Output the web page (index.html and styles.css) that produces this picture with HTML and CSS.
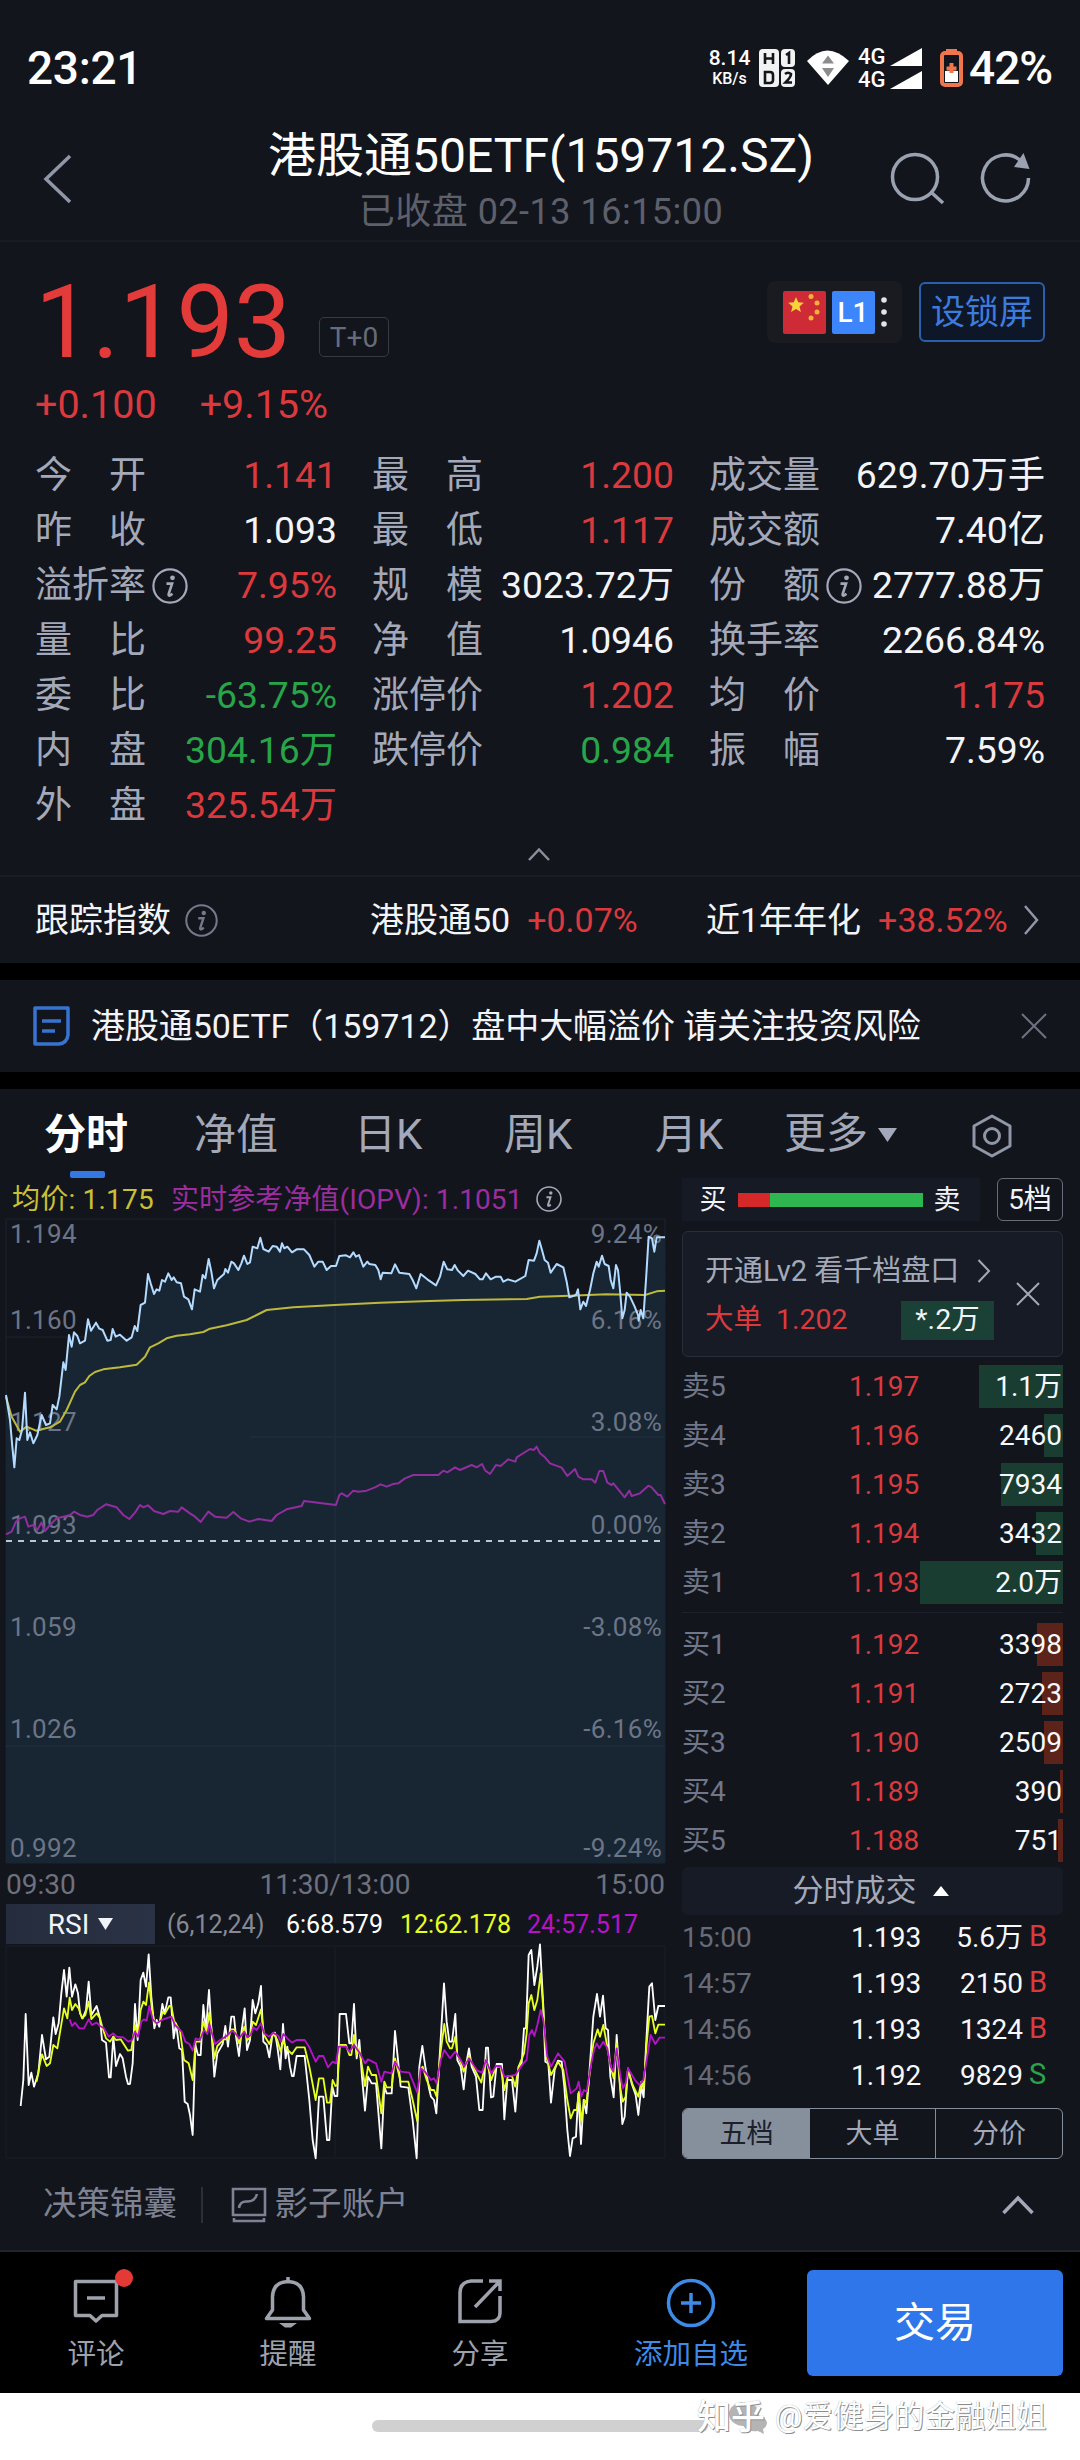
FILE: index.html
```html
<!DOCTYPE html>
<html lang="zh-CN">
<head>
<meta charset="utf-8">
<title>港股通50ETF(159712.SZ)</title>
<link rel="stylesheet" href="styles.css">
</head>
<body>
<svg class="defs" width="0" height="0">
  <symbol id="info" viewBox="0 0 36 36">
    <circle cx="18" cy="18" r="16.6" fill="none" stroke="currentColor" stroke-width="2.2"/>
    <circle cx="20.5" cy="9.8" r="2.4" fill="currentColor"/>
    <path d="M14.5 15.6h5.6l-3.4 10.2q-.6 2.4 1.6 1.6l2.2-1.6" fill="none" stroke="currentColor" stroke-width="2.6"/>
  </symbol>
</svg>

<header class="status">
  <span class="clock">23:21</span>
  <div class="status-icons">
    <div class="speed"><b>8.14</b><span>KB/s</span></div>
    <svg class="sim" width="36" height="38" viewBox="0 0 36 38">
      <rect x="0" y="0" width="20" height="38" rx="4" fill="#f2f2f2"/>
      <rect x="22" y="0" width="14" height="18" rx="4" fill="#f2f2f2"/>
      <rect x="22" y="20" width="14" height="18" rx="4" fill="#f2f2f2"/>
      <path d="M6 4v11M14 4v11M6 9.5h8M6 23v11h5q3 0 3-3v-5q0-3-3-3zM27 6l3-2v11M26 25q3-2.500 6 0q0 3-5.500 8.500H33" fill="none" stroke="#13151d" stroke-width="2.600"/>
    </svg>
    <svg class="wifi" width="42" height="36" viewBox="0 0 42 36">
      <path d="M0 11Q20-10 42 11L21 35Z" fill="#fff"/>
      <path d="M15 13.500l6-8 6 8zM15 18h12l-6 9z" fill="#8c8c8c"/>
    </svg>
    <div class="nets">
      <div class="net"><span>4G</span><svg width="32" height="18"><path d="M32 0V18H0Z" fill="#fff"/></svg></div>
      <div class="net"><span>4G</span><svg width="32" height="18"><path d="M32 0V18H0Z" fill="#fff"/></svg></div>
    </div>
    <svg class="battery" width="23" height="38" viewBox="0 0 23 38">
      <rect x="6" y="0" width="11" height="5" fill="#f0764d"/>
      <rect x="2" y="4" width="19" height="32" rx="3" fill="#13151d" stroke="#f0764d" stroke-width="4"/>
      <rect x="5" y="22" width="13" height="11" fill="#fff"/>
      <path d="M11.500 14v10M6.500 19.500h10" stroke="#f0764d" stroke-width="4"/>
    </svg>
    <span class="percent">42%</span>
  </div>
</header>

<nav class="titlebar">
  <svg class="back" width="30" height="50" viewBox="0 0 30 50"><path d="M27 2L3 25L27 48" fill="none" stroke="#8f96a6" stroke-width="3.500"/></svg>
  <div class="titles">
    <h1>港股通50ETF(159712.SZ)</h1>
    <p>已收盘 02-13 16:15:00</p>
  </div>
  <div class="title-actions">
    <svg width="56" height="54" viewBox="0 0 56 54" fill="none" stroke="#9aa1b0" stroke-width="3.500"><circle cx="25" cy="25" r="22.500"/><path d="M42 41l11 10"/></svg>
    <svg width="50" height="54" viewBox="0 0 50 54"><path d="M39.500 8.500A23 23 0 1 0 47.500 26" fill="none" stroke="#9aa1b0" stroke-width="3.500"/><path d="M42.500 1L48.500 17L33 15Z" fill="#9aa1b0"/></svg>
  </div>
</nav>

<section class="quote">
  <div class="price-row">
    <span class="price">1.193</span>
    <span class="tplus">T+0</span>
    <div class="badges">
      <svg width="43" height="43" viewBox="0 0 43 43"><rect width="43" height="43" rx="2" fill="#cf2b36"/><path d="M13 6l2.200 5.300 5.600.4-4.300 3.700 1.400 5.600-4.900-3-4.900 3 1.400-5.600L5.200 11.700l5.600-.4z" fill="#f8d33c"/><g fill="#f2b23a"><circle cx="28" cy="5.500" r="2.500"/><circle cx="34" cy="12" r="2.500"/><circle cx="34" cy="21" r="2.500"/><circle cx="28" cy="27" r="2.500"/></g></svg>
      <span class="level">L1</span>
      <svg width="6" height="32" fill="#e4e4e4"><circle cx="3" cy="4" r="2.800"/><circle cx="3" cy="16" r="2.800"/><circle cx="3" cy="28" r="2.800"/></svg>
    </div>
    <span class="lock">设锁屏</span>
  </div>
  <div class="change"><span>+0.100</span><span>+9.15%</span></div>
  <div class="stats">
    <dl><dt>今<i></i>开</dt><dd class="up">1.141</dd></dl>
    <dl><dt>最<i></i>高</dt><dd class="up">1.200</dd></dl>
    <dl><dt>成交量</dt><dd>629.70万手</dd></dl>
    <dl><dt>昨<i></i>收</dt><dd>1.093</dd></dl>
    <dl><dt>最<i></i>低</dt><dd class="up">1.117</dd></dl>
    <dl><dt>成交额</dt><dd>7.40亿</dd></dl>
    <dl><dt>溢折率</dt><svg class="info"><use href="#info"/></svg><dd class="up">7.95%</dd></dl>
    <dl><dt>规<i></i>模</dt><dd>3023.72万</dd></dl>
    <dl><dt>份<i></i>额</dt><svg class="info"><use href="#info"/></svg><dd>2777.88万</dd></dl>
    <dl><dt>量<i></i>比</dt><dd class="up">99.25</dd></dl>
    <dl><dt>净<i></i>值</dt><dd>1.0946</dd></dl>
    <dl><dt>换手率</dt><dd>2266.84%</dd></dl>
    <dl><dt>委<i></i>比</dt><dd class="down">-63.75%</dd></dl>
    <dl><dt>涨停价</dt><dd class="up">1.202</dd></dl>
    <dl><dt>均<i></i>价</dt><dd class="up">1.175</dd></dl>
    <dl><dt>内<i></i>盘</dt><dd class="down">304.16万</dd></dl>
    <dl><dt>跌停价</dt><dd class="down">0.984</dd></dl>
    <dl><dt>振<i></i>幅</dt><dd>7.59%</dd></dl>
    <dl><dt>外<i></i>盘</dt><dd class="up">325.54万</dd></dl>
  </div>
  <div class="collapse"><svg width="24" height="16" viewBox="0 0 24 16"><path d="M2 14L12 3.500L22 14" fill="none" stroke="#8b8f9c" stroke-width="2.500"/></svg></div>
</section>

<section class="index-row">
  <div>跟踪指数<svg class="info dim"><use href="#info"/></svg></div>
  <div>港股通50<span class="up">+0.07%</span></div>
  <div>近1年年化<span class="up">+38.52%</span><svg class="more" width="16" height="30" viewBox="0 0 16 30"><path d="M2 1L14 15L2 29" fill="none" stroke="#8f96a6" stroke-width="2.500"/></svg></div>
</section>

<section class="notice">
  <svg width="37" height="40" viewBox="0 0 37 40" fill="none" stroke="#3774d2" stroke-width="3.500"><path d="M2 2H35V29Q34 37 26 38H2Z" stroke-linejoin="round"/><path d="M9 15h19M9 25h13"/></svg>
  <p>港股通50ETF（159712）盘中大幅溢价 请关注投资风险</p>
  <svg width="28" height="28" viewBox="0 0 28 28"><path d="M2 2L26 26M26 2L2 26" stroke="#6d7281" stroke-width="2"/></svg>
</section>

<section class="tabs">
  <span class="tab active">分时</span>
  <span class="tab">净值</span>
  <span class="tab">日K</span>
  <span class="tab">周K</span>
  <span class="tab">月K</span>
  <span class="tab more-tab">更多<svg width="19" height="14"><path d="M0 0H19L9.500 14Z" fill="#a3a9b8"/></svg></span>
  <svg class="gear" width="42" height="44" viewBox="0 0 42 44" fill="none" stroke="#8f96a6" stroke-width="3"><path d="M21 2L39 12V32L21 42L3 32V12Z" stroke-linejoin="round"/><circle cx="21" cy="22" r="7.500"/></svg>
</section>

<main class="market">
  <div class="charts">
    <div class="legend"><span class="avg">均价: 1.175</span><span class="iopv">实时参考净值(IOPV): 1.1051</span><svg class="info"><use href="#info"/></svg></div>
    <svg class="price-chart" width="680" height="687" viewBox="0 1217 680 687">
      <g class="grid"><path d="M6 1219H665M6 1337H665M6 1437H665M6 1644H665M6 1746H665M6 1863H665M6 1219V1863M335 1219V1863M665 1219V1863"/></g>
      <g transform="translate(0 1200) scale(.33333)">
        <path class="area" d="M18 585L30 660 37 740 43 802 50 715 58 720 66 690 75 578 82 720 90 697 100 730 112 705 125 645 138 675 150 670 158 615 170 628 178 590 190 487 197 510 207 405 215 440 222 397 232 408 240 430 255 422 264 358 273 392 288 368 298 386 308 390 322 422 332 420 338 387 347 410 360 404 380 422 395 412 404 378 412 393 422 315 435 308 444 222 452 250 462 282 470 268 478 272 486 240 495 245 505 220 515 240 521 232 530 247 543 250 552 290 565 298 576 328 584 268 600 275 608 225 616 235 626 177 634 215 642 265 652 240 672 222 676 207 684 218 694 185 702 190 715 210 724 190 732 167 742 192 750 187 758 140 772 145 781 113 790 147 806 155 818 138 830 140 840 155 846 130 853 145 862 140 876 157 890 148 912 148 928 165 943 200 955 185 968 185 980 210 993 198 1008 198 1018 168 1038 166 1050 172 1060 157 1068 170 1077 165 1090 200 1102 185 1108 192 1126 195 1135 210 1142 238 1148 218 1174 220 1185 193 1198 218 1228 222 1238 240 1249 265 1262 222 1282 238 1308 256 1320 230 1331 185 1342 208 1356 210 1364 195 1374 212 1390 228 1404 212 1426 222 1440 238 1448 238 1458 220 1472 238 1488 230 1502 230 1510 245 1524 238 1546 245 1576 228 1586 180 1602 182 1610 160 1618 122 1626 150 1634 180 1644 188 1652 218 1670 192 1690 202 1700 245 1708 292 1728 285 1734 268 1741 328 1750 305 1758 318 1770 270 1780 220 1790 185 1796 200 1806 167 1814 192 1826 198 1832 240 1840 265 1848 195 1854 210 1860 270 1867 355 1874 330 1880 278 1890 290 1904 320 1914 345 1916 362 1922 330 1930 355 1938 240 1946 110 1956 115 1963 155 1970 112 1995 112V1989H18Z"/>
      </g>
      <path class="overgrid" d="M335 1260V1863M6 1746H665M250 1437H665"/>
      <g class="axis">
        <text x="10" y="1243">1.194</text><text x="10" y="1329">1.160</text><text x="10" y="1431">1.127</text><text x="10" y="1534">1.093</text><text x="10" y="1636">1.059</text><text x="10" y="1738">1.026</text><text x="10" y="1857">0.992</text>
        <g text-anchor="end"><text x="662" y="1243">9.24%</text><text x="662" y="1329">6.16%</text><text x="662" y="1431">3.08%</text><text x="662" y="1534">0.00%</text><text x="662" y="1636">-3.08%</text><text x="662" y="1738">-6.16%</text><text x="662" y="1857">-9.24%</text></g>
      </g>
      <g class="lines" transform="translate(0 1200) scale(.33333)">
        <path class="iopv-line" d="M18 1003L35 995 48 965 60 955 75 950 85 980 100 975 112 990 124 968 135 993 150 975 170 955 190 950 210 945 222 935 240 945 262 950 280 945 292 930 318 913 350 922 370 945 388 957 405 938 420 915 430 922 444 916 462 933 490 942 510 933 535 935 545 922 570 940 585 950 602 966 625 935 645 950 680 953 700 936 722 955 748 965 775 957 815 963 830 945 860 928 905 918 912 903 1008 915 1018 885 1025 880 1042 890 1060 872 1075 875 1100 872 1125 862 1142 853 1160 860 1180 852 1195 850 1215 835 1240 825 1315 825 1330 812 1342 817 1365 802 1380 810 1415 795 1430 802 1446 792 1456 812 1470 822 1488 795 1502 798 1525 778 1546 785 1550 772 1590 747 1602 750 1610 740 1620 760 1635 772 1650 790 1685 803 1702 828 1725 807 1735 830 1750 838 1775 838 1786 848 1798 813 1810 813 1822 848 1835 855 1840 850 1874 892 1888 872 1895 888 1920 880 1945 857 1955 862 1975 885 1982 885 1995 912"/>
        <path class="avg-line" d="M18 590L35 650 60 695 80 680 108 692 150 682 180 665 200 630 225 575 240 555 255 547 268 528 285 516 310 508 360 502 410 494 435 470 450 442 475 430 500 415 530 407 570 403 610 396 630 386 680 376 740 360 770 345 800 330 880 322 1018 314 1140 308 1290 303 1390 300 1580 297 1620 290 1710 287 1820 283 1935 285 1970 274 1995 272"/>
        <path class="price-line" d="M18 585L30 660 37 740 43 802 50 715 58 720 66 690 75 578 82 720 90 697 100 730 112 705 125 645 138 675 150 670 158 615 170 628 178 590 190 487 197 510 207 405 215 440 222 397 232 408 240 430 255 422 264 358 273 392 288 368 298 386 308 390 322 422 332 420 338 387 347 410 360 404 380 422 395 412 404 378 412 393 422 315 435 308 444 222 452 250 462 282 470 268 478 272 486 240 495 245 505 220 515 240 521 232 530 247 543 250 552 290 565 298 576 328 584 268 600 275 608 225 616 235 626 177 634 215 642 265 652 240 672 222 676 207 684 218 694 185 702 190 715 210 724 190 732 167 742 192 750 187 758 140 772 145 781 113 790 147 806 155 818 138 830 140 840 155 846 130 853 145 862 140 876 157 890 148 912 148 928 165 943 200 955 185 968 185 980 210 993 198 1008 198 1018 168 1038 166 1050 172 1060 157 1068 170 1077 165 1090 200 1102 185 1108 192 1126 195 1135 210 1142 238 1148 218 1174 220 1185 193 1198 218 1228 222 1238 240 1249 265 1262 222 1282 238 1308 256 1320 230 1331 185 1342 208 1356 210 1364 195 1374 212 1390 228 1404 212 1426 222 1440 238 1448 238 1458 220 1472 238 1488 230 1502 230 1510 245 1524 238 1546 245 1576 228 1586 180 1602 182 1610 160 1618 122 1626 150 1634 180 1644 188 1652 218 1670 192 1690 202 1700 245 1708 292 1728 285 1734 268 1741 328 1750 305 1758 318 1770 270 1780 220 1790 185 1796 200 1806 167 1814 192 1826 198 1832 240 1840 265 1848 195 1854 210 1860 270 1867 355 1874 330 1880 278 1890 290 1904 320 1914 345 1916 362 1922 330 1930 355 1938 240 1946 110 1956 115 1963 155 1970 112 1995 112"/>
      </g>
      <path class="zero" d="M6 1541H660"/>
      <g class="times"><text x="6" y="1894">09:30</text><text x="335" y="1894" text-anchor="middle">11:30/13:00</text><text x="665" y="1894" text-anchor="end">15:00</text></g>
    </svg>
    <div class="rsi-head"><span class="rsi-name">RSI<svg width="15" height="12"><path d="M0 0H15L7.500 12Z" fill="#f0f3fa"/></svg></span><span class="r0">(6,12,24)</span><span class="r6">6:68.579</span><span class="r12">12:62.178</span><span class="r24">24:57.517</span></div>
    <svg class="rsi-chart" width="680" height="220" viewBox="0 1944 680 220">
      <g class="grid faint"><path d="M6 1946H665M6 2158H665M6 1946V2158M335 1946V2158M665 1946V2158"/></g>
      <g class="lines rsi-lines" transform="translate(0 1900) scale(.33333)">
        <path stroke="#fff" d="M62 618L70 540 77 342 86 555 94 518 102 560 115 520 126 405 138 478 148 470 160 352 167 402 176 370 184 280 192 210 200 290 208 203 216 290 226 253 234 280 240 340 248 355 258 330 266 245 274 345 290 318 300 355 306 420 318 428 327 532 332 532 340 410 348 498 360 462 368 475 378 530 384 552 390 552 398 490 405 312 413 420 422 240 430 218 438 260 446 163 454 290 463 385 470 360 478 380 487 312 494 340 505 292 512 292 521 415 528 370 538 445 546 450 554 605 563 612 570 645 578 705 586 435 594 465 602 465 610 315 618 390 627 270 635 400 643 530 652 460 668 432 676 378 684 440 694 350 702 350 708 410 717 468 724 400 734 325 741 450 750 420 758 300 766 340 775 310 783 258 790 425 800 435 808 472 818 400 825 398 832 440 841 508 849 372 857 475 862 440 870 500 876 528 881 528 890 468 914 468 928 600 938 720 947 775 957 590 970 590 981 720 988 720 997 560 1004 588 1012 588 1019 342 1038 342 1048 430 1054 430 1062 312 1070 475 1078 420 1086 530 1095 632 1104 530 1115 550 1128 550 1144 745 1153 560 1160 580 1175 580 1185 393 1193 470 1202 560 1225 563 1238 660 1250 775 1258 500 1267 438 1276 500 1287 565 1293 590 1302 600 1309 640 1316 520 1332 250 1340 365 1348 425 1356 425 1366 342 1372 480 1382 500 1391 568 1399 490 1407 445 1415 500 1428 530 1438 630 1448 630 1458 443 1464 443 1473 592 1480 590 1490 492 1506 492 1513 658 1522 540 1536 540 1546 635 1556 500 1565 490 1572 385 1578 385 1586 165 1594 150 1603 255 1612 200 1620 133 1630 320 1636 485 1645 490 1653 608 1664 510 1674 482 1685 485 1693 560 1702 690 1710 768 1718 715 1728 710 1735 580 1743 732 1751 600 1759 640 1768 520 1780 350 1791 282 1800 350 1809 287 1817 385 1824 390 1831 530 1841 592 1850 405 1858 520 1867 672 1874 650 1884 505 1895 550 1907 585 1915 645 1924 560 1931 592 1938 440 1948 260 1956 250 1966 360 1975 318 1995 318"/>
        <path stroke="#e6ff1e" d="M110 545L118 500 126 463 140 498 150 490 160 435 172 445 182 385 192 325 202 355 209 293 216 330 226 312 236 325 246 355 256 345 266 305 274 357 290 340 300 355 308 385 318 415 330 425 340 410 348 420 362 418 384 452 394 450 405 375 414 410 422 330 430 305 438 315 447 248 456 330 464 370 480 365 488 335 494 342 508 318 514 318 522 362 540 392 552 480 566 490 578 540 587 425 600 425 610 365 620 395 628 338 636 400 643 475 652 438 672 418 684 418 694 388 704 388 717 430 733 380 742 420 750 412 758 365 768 375 783 328 792 405 808 432 820 400 832 420 842 455 850 420 858 445 876 462 890 442 914 442 928 500 947 600 957 535 970 535 981 608 990 608 998 540 1006 558 1012 555 1020 435 1038 435 1048 465 1054 465 1062 405 1070 465 1078 445 1095 558 1104 500 1115 525 1128 525 1144 640 1153 545 1160 562 1175 562 1185 475 1202 545 1225 545 1238 600 1252 665 1260 510 1268 500 1280 540 1293 570 1302 570 1310 590 1320 470 1333 372 1340 425 1350 445 1356 445 1366 410 1372 465 1382 485 1391 515 1407 468 1420 500 1432 525 1444 548 1458 478 1474 540 1488 500 1502 500 1513 570 1524 528 1536 528 1546 560 1556 500 1572 460 1580 400 1586 310 1594 285 1603 330 1612 300 1622 220 1630 330 1638 465 1653 525 1674 485 1690 510 1702 600 1712 655 1722 630 1730 630 1737 575 1744 665 1753 600 1759 610 1768 530 1780 430 1793 388 1800 410 1810 375 1820 430 1832 500 1841 535 1850 430 1860 560 1868 605 1877 590 1884 510 1898 555 1915 590 1924 545 1931 565 1940 430 1948 350 1956 348 1966 400 1975 374 1995 374"/>
        <path stroke="#b413c8" d="M209 358L216 378 225 368 238 385 252 385 266 358 276 375 290 368 300 378 312 385 326 410 340 400 350 410 370 412 385 425 396 420 405 395 414 410 424 365 432 358 440 362 448 318 458 358 470 370 490 358 514 350 525 375 545 395 556 425 568 432 578 452 587 415 600 420 612 390 622 402 628 372 636 400 645 432 660 420 680 408 696 392 706 400 717 415 733 395 742 412 752 405 760 382 770 390 783 370 792 400 808 410 820 398 835 408 843 425 850 402 862 415 876 428 890 420 914 420 928 442 947 485 957 468 970 468 984 502 998 485 1008 490 1016 440 1038 440 1048 455 1062 435 1080 460 1095 490 1104 478 1128 490 1144 545 1153 515 1175 520 1185 485 1202 515 1228 518 1252 578 1262 505 1275 515 1293 540 1302 535 1310 550 1322 480 1333 450 1350 475 1366 455 1382 480 1393 500 1407 475 1432 512 1446 518 1458 480 1474 520 1488 498 1502 498 1513 530 1546 525 1570 490 1580 480 1588 405 1596 390 1603 408 1612 375 1622 330 1630 360 1642 470 1653 500 1674 460 1694 485 1712 580 1730 565 1736 545 1744 590 1752 570 1760 575 1772 500 1782 450 1790 430 1798 445 1810 425 1822 445 1832 500 1840 515 1850 445 1860 520 1868 565 1877 550 1884 505 1905 540 1918 555 1930 540 1940 480 1952 405 1966 432 1978 413 1995 413"/>
      </g>
    </svg>
  </div>

  <aside class="book">
    <div class="ratio-row">
      <div class="ratio"><span>买</span><div class="ratio-bar"><i style="width:17.8%"></i></div><span>卖</span></div>
      <span class="depth">5档</span>
    </div>
    <div class="promo">
      <div class="promo-main">
        <div class="promo-title">开通Lv2 看千档盘口<svg width="14" height="24" viewBox="0 0 14 24"><path d="M1.500 1L12 12L1.500 23" fill="none" stroke="#a3a9b8" stroke-width="2"/></svg></div>
        <div class="promo-line"><span>大单</span><span>1.202</span><b>*.2万</b></div>
      </div>
      <svg width="26" height="26" viewBox="0 0 26 26"><path d="M2 2L24 24M24 2L2 24" stroke="#a3a9b8" stroke-width="2"/></svg>
    </div>
    <ul class="levels sell">
      <li><span>卖5</span><span class="up">1.197</span><div><i style="width:84px"></i><b>1.1万</b></div></li>
      <li><span>卖4</span><span class="up">1.196</span><div><i style="width:19px"></i><b>2460</b></div></li>
      <li><span>卖3</span><span class="up">1.195</span><div><i style="width:62px"></i><b>7934</b></div></li>
      <li><span>卖2</span><span class="up">1.194</span><div><i style="width:27px"></i><b>3432</b></div></li>
      <li><span>卖1</span><span class="up">1.193</span><div><i style="width:143px"></i><b>2.0万</b></div></li>
    </ul>
    <ul class="levels buy">
      <li><span>买1</span><span class="up">1.192</span><div><i style="width:26px"></i><b>3398</b></div></li>
      <li><span>买2</span><span class="up">1.191</span><div><i style="width:21px"></i><b>2723</b></div></li>
      <li><span>买3</span><span class="up">1.190</span><div><i style="width:19px"></i><b>2509</b></div></li>
      <li><span>买4</span><span class="up">1.189</span><div><i style="width:3px"></i><b>390</b></div></li>
      <li><span>买5</span><span class="up">1.188</span><div><i style="width:5px"></i><b>751</b></div></li>
    </ul>
    <div class="trades-head">分时成交<svg width="16" height="10"><path d="M0 10H16L8 0Z" fill="#fff"/></svg></div>
    <ul class="trades">
      <li><span>15:00</span><b>1.193</b><b>5.6万</b><em class="up">B</em></li>
      <li><span>14:57</span><b>1.193</b><b>2150</b><em class="up">B</em></li>
      <li><span>14:56</span><b>1.193</b><b>1324</b><em class="up">B</em></li>
      <li><span>14:56</span><b>1.192</b><b>9829</b><em class="down">S</em></li>
    </ul>
    <div class="segment"><span class="on">五档</span><span>大单</span><span>分价</span></div>
  </aside>
</main>

<section class="tools">
  <span>决策锦囊</span>
  <i></i>
  <svg width="36" height="36" viewBox="0 0 36 36" fill="none" stroke="#7d8392" stroke-width="2.600"><path d="M2 2H34V28H2ZM3 31V34H33V31"/><path d="M8 21q1-7 8-6.500q8 0 10-7.500"/></svg>
  <span>影子账户</span>
  <svg class="expand" width="34" height="20" viewBox="0 0 34 20"><path d="M2.500 18L17 3L31.500 18" fill="none" stroke="#a3a9b8" stroke-width="3.500"/></svg>
</section>

<footer class="bottom">
  <div class="item"><svg width="56" height="54" viewBox="0 0 56 54" fill="none" stroke="#9da2ad" stroke-width="3.500"><path d="M7.500 9.500H48.500V43.500H34L28 49L22 43.500H7.500Z" stroke-linejoin="round"/><path d="M19 26H37"/></svg><span>评论</span><i class="dot"></i></div>
  <div class="item"><svg width="56" height="54" viewBox="0 0 56 54" fill="none" stroke="#9da2ad" stroke-width="3.500"><path d="M28 5V11M6.500 46.500H49.500L43.500 38V25Q43 10 28 9.500Q13 10 12.500 25V38Z" stroke-linejoin="round"/><path d="M19 51H37L31 55.500H25Z" fill="#9da2ad" stroke="none"/></svg><span>提醒</span></div>
  <div class="item"><svg width="56" height="54" viewBox="0 0 56 54" fill="none" stroke="#9da2ad" stroke-width="3.500"><path d="M31 9H19Q8 10 8 21V49.500H39Q48 49 48 41V24M37 9H48V19M48 9L23 35"/></svg><span>分享</span></div>
  <div class="item add"><svg width="56" height="54" viewBox="0 0 56 54" fill="none" stroke="#3f8ae6" stroke-width="3.500"><circle cx="28" cy="31" r="22.500"/><path d="M28 21V41M18 31H38"/></svg><span>添加自选</span></div>
  <button>交易</button>
</footer>

<div class="gesture">
  <i class="handle"></i>
  <svg class="bubble" width="40" height="34" viewBox="0 0 40 34" fill="#b4b4b4"><ellipse cx="16" cy="12" rx="15" ry="12"/><path d="M14 20a13 10 0 0 1 25 0q0 5-4 7l1 5-6-3q-14 2-16-9z"/></svg>
  <div class="mark"><span>知乎</span><span>@爱健身的金融姐姐</span></div>
</div>
</body>
</html>
```
FILE: styles.css
```css
* { box-sizing: border-box; margin: 0; padding: 0; }
body {
  width: 1080px;
  height: 2460px;
  overflow: hidden;
  background: #13151d;
  color: #f2f4f8;
  font-family: Roboto, "Noto Sans CJK SC", sans-serif;
  font-size: 34px;
}
svg { display: block; flex: none; overflow: visible; }
.defs { position: absolute; }
b, em, i { font-weight: 400; font-style: normal; }
ul { list-style: none; }
.up { color: #dc393d; }
.down { color: #27a548; }
.info { width: 36px; height: 36px; color: #a3a9b8; }

/* status bar */
.status { height: 118px; padding: 18px 24px 0 27px; display: flex; align-items: center; justify-content: space-between; color: #fff; }
.clock { font-size: 46px; font-weight: 500; letter-spacing: -.3px; }
.status-icons { display: flex; align-items: center; }
.speed { width: 41px; margin-right: 9px; display: flex; flex-direction: column; align-items: center; line-height: 20px; gap: 1px; }
.speed b { font-size: 21px; font-weight: 500; }
.speed span { font-size: 16px; font-weight: 500; }
.wifi { margin: 0 9px 0 12px; }
.nets { display: flex; flex-direction: column; gap: 4px; }
.net { display: flex; align-items: center; justify-content: space-between; width: 64px; height: 19px; font-size: 22px; line-height: 19px; font-weight: 500; }
.battery { margin: 0 6px 0 18px; }
.percent { font-size: 46px; font-weight: 500; width: 87px; letter-spacing: -1px; }

/* title bar */
.titlebar { height: 124px; border-bottom: 2px solid #181b23; display: grid; grid-template-columns: 240px 1fr 240px; }
.back { margin: 36px 0 0 43px; }
.titles { text-align: center; white-space: nowrap; padding-top: 8px; margin-left: 2px; }
.titles h1 { font-size: 48px; line-height: 60px; font-weight: 400; color: #fff; }
.titles p { font-size: 36px; line-height: 53px; color: #5d606b; letter-spacing: .5px; }
.title-actions { display: flex; gap: 35px; padding: 34px 0 0 50px; }

/* quote */
.quote { height: 635px; border-bottom: 2px solid #1a1d26; padding: 0 35px; }
.price-row { height: 130px; display: flex; align-items: flex-start; }
.price { font-size: 102px; line-height: 120px; color: #e33a3a; width: 284px; padding-top: 20px; }
.tplus { margin: 75px auto 0 0; width: 70px; height: 40px; line-height: 39px; border: 1.500px solid #373b47; border-radius: 5px; font-size: 28px; text-align: center; color: #676c79; }
.badges { margin: 39px 17px 0 0; width: 135px; height: 62px; border-radius: 8px; background: #191b21; display: flex; align-items: center; justify-content: center; gap: 6px; }
.level { width: 43px; height: 43px; border-radius: 2px; background: #3d85fa; color: #fff; font-size: 28px; font-weight: 500; line-height: 43px; text-align: center; }
.lock { margin-top: 40px; width: 126px; height: 60px; border: 2px solid #2b5fa8; border-radius: 6px; background: #0e1727; color: #3d7bdc; font-size: 34px; line-height: 57px; text-align: center; }
.change { height: 76px; padding-top: 7px; line-height: 51px; font-size: 39.500px; color: #dc393d; display: flex; gap: 43px; }
.stats { display: grid; grid-template-columns: 302px 302px 336px; column-gap: 35px; grid-auto-rows: 55px; width: 1010px; }
.stats dl { display: flex; align-items: center; font-size: 37.300px; line-height: 55px; }
.stats dt { width: 111px; font-size: 37px; display: flex; justify-content: space-between; color: #a3a9b8; white-space: nowrap; }
.stats dd { margin-left: auto; white-space: nowrap; }
.stats .info { margin-left: 6px; }
.collapse { display: flex; justify-content: center; padding: 13px 2px 0 0; }

.index-row { height: 86px; padding: 0 35px; display: grid; grid-template-columns: 335px 336px 339px; line-height: 80px; }
.index-row div { display: flex; align-items: center; white-space: nowrap; height: 86px; }
.index-row span { margin-left: 17px; }
.index-row .info { width: 33px; height: 33px; margin-left: 14px; }
.dim { color: #747a89; }
.index-row .more { margin-left: 15px; }

.notice { height: 126px; border: solid #000; border-width: 17px 0; padding: 0 32px 0 33px; display: flex; align-items: center; }
.notice p { margin: 0 auto 0 21px; white-space: nowrap; line-height: 50px; letter-spacing: -.08px; }

/* period tabs */
.tabs { height: 89px; display: flex; align-items: center; padding-left: 44px; font-size: 42px; color: #a3a9b8; }
.tab { white-space: nowrap; width: 150px; height: 89px; line-height: 91px; }
.tab:nth-child(2) { width: 160px; }
.tab:nth-child(4) { width: 151px; }
.tab:nth-child(5) { width: 129px; }
.active { color: #fff; font-weight: 700; display: flex; flex-direction: column; }
.active::after { content: ""; width: 35px; height: 7px; border-radius: 2px; background: #3478e4; margin: -9px 0 0 26px; }
.more-tab { width: 187px; display: flex; align-items: center; gap: 10px; }
.more-tab svg { margin-top: 3px; }
.gear { margin-top: 4px; }

/* charts */
.market { display: grid; grid-template-columns: 680px 400px; height: 986px; }
.legend { height: 39px; padding-left: 12px; display: flex; align-items: center; font-size: 28px; line-height: 39px; white-space: nowrap; padding-top: 3px; }
.avg { width: 159px; color: #c9c035; letter-spacing: .2px; }
.iopv { width: 365px; color: #9b2d9e; letter-spacing: .1px; }
.legend .info { width: 26px; height: 26px; }
.grid { fill: none; stroke: #1a1e28; stroke-width: 1.500; }
.faint { stroke: #181b24; }
.area { fill: #182634; }
.overgrid { fill: none; stroke: #1f2d3b; stroke-width: 1.500; }
.lines { fill: none; stroke-width: 6; stroke-linejoin: round; }
.price-line { stroke: #b3dbff; }
.avg-line { stroke: #bdb93c; }
.iopv-line { stroke: #8f2e9c; }
.zero { stroke: #b9c8d2; stroke-width: 1.800; stroke-dasharray: 6 6; fill: none; }
.axis { font-size: 26px; letter-spacing: .3px; fill: #6c7586; }
.times { font-size: 28px; fill: #6d717e; }
.rsi-head { height: 40px; padding-left: 6px; display: flex; align-items: center; font-size: 25px; line-height: 43px; white-space: nowrap; }
.rsi-name { width: 149px; height: 40px; margin-right: 12px; background: linear-gradient(90deg, #242c3d, #2a3245); font-size: 28px; display: flex; align-items: center; justify-content: center; gap: 9px; color: #f0f3fa; }
.r0 { width: 119px; color: #858993; }
.r6 { width: 114px; color: #fff; }
.r12 { width: 127px; color: #e6ff1e; }
.r24 { color: #b413c8; }
.rsi-lines { stroke-width: 5.500; }

/* order book */
.book { padding: 0 17px 0 2px; }
.ratio-row { display: flex; justify-content: space-between; }
.ratio { width: 298px; height: 43px; background: #161a25; display: flex; align-items: center; justify-content: center; gap: 11px; font-size: 27px; line-height: 44px; padding-right: 2px; }
.ratio-bar { width: 185px; height: 14px; background: #2eb750; }
.ratio-bar i { display: block; height: 14px; background: #d42829; }
.depth { width: 66px; height: 43px; line-height: 42px; border: 1.500px solid #696d79; border-radius: 6px; text-align: center; font-size: 28px; }
.promo { margin-top: 10px; height: 126px; border: 1.500px solid #292e3b; border-radius: 6px; background: #171b26; display: flex; align-items: center; padding-left: 22px; color: #a3a9b8; white-space: nowrap; }
.promo-main { width: 289px; margin-right: 21px; }
.promo-title { height: 54px; padding-top: 3px; display: flex; align-items: center; gap: 18px; font-size: 29px; line-height: 44px; }
.promo-line { height: 50px; display: flex; align-items: center; font-size: 28.500px; line-height: 48px; color: #dc393d; padding-bottom: 2px; }
.promo-line span:nth-child(2) { margin-left: 14px; }
.promo-line b { margin-left: auto; width: 93px; height: 39px; line-height: 38px; text-align: center; background: #1b4035; color: #f2f4f8; }
.levels { font-size: 28px; line-height: 43px; display: grid; gap: 6px; }
.levels li { display: grid; grid-template-columns: 167px 71px 1fr; height: 43px; color: #70778a; }
.levels div { position: relative; display: flex; justify-content: flex-end; }
.levels i { position: absolute; right: 0; top: 0; height: 43px; }
.levels b { position: relative; color: #f7f9fc; padding-right: 1px; white-space: nowrap; }
.sell { padding: 8px 0; border-bottom: 1.500px solid #1d212b; }
.sell i { background: #1a3d32; }
.buy { padding-top: 10px; }
.buy i { background: #5b2319; }
.trades-head { margin-top: 5px; height: 48px; border-radius: 6px; background: #171b26; display: flex; align-items: center; justify-content: center; gap: 16px; font-size: 31px; line-height: 50px; color: #a3a9b8; }
.trades-head svg { margin-right: 4px; }
.trades { font-size: 28px; line-height: 46px; }
.trades li { display: grid; grid-template-columns: 169px 71px 101px 1fr; height: 46px; color: #666b79; }
.trades b { color: #f7f9fc; text-align: right; }
.trades b:nth-child(2) { text-align: left; }
.trades em { padding-left: 6px; font-size: 29px; line-height: 42px; }
.segment { margin-top: 9px; height: 51px; border: 1.500px solid #868d9a; border-radius: 6px; overflow: hidden; display: grid; grid-template-columns: 127px 126px 1fr; font-size: 27px; line-height: 50px; text-align: center; color: #a3a9b8; }
.segment span + span { border-right: 1.500px solid #868d9a; }
.segment span:last-child { border: 0; }
.segment .on { background: #868f9c; color: #1b202b; }

/* bottom */
.tools { height: 88px; border-bottom: 2px solid #22242b; display: flex; align-items: center; padding: 0 45px 5px 43px; font-size: 33.500px; line-height: 48px; color: #7d8392; }
.tools span { margin-top: -2px; }
.tools i { width: 1.500px; height: 36px; background: #2b2f3b; margin: 0 28px 0 24px; }
.tools svg + span { margin-left: 8px; }
.tools .expand { margin-left: auto; }
.bottom { height: 141px; background: #000; display: flex; color: #9da2ad; font-size: 28.500px; }
.item { position: relative; width: 192px; padding-top: 20px; display: flex; flex-direction: column; align-items: center; }
.item span { margin-top: 8px; line-height: 42px; }
.item.add { width: 231px; color: #3f8ae6; }
.item.add svg, .item.add span { margin-right: 1px; }
.dot { position: absolute; left: 115px; top: 17px; width: 18px; height: 18px; border-radius: 50%; background: #e53935; }
.bottom button { margin-top: 18px; width: 256px; height: 106px; border: 0; border-radius: 6px; background: #2f76ea; color: #fff; font: 41px/100px Roboto, "Noto Sans CJK SC", sans-serif; }
.gesture { position: relative; height: 67px; background: #fff; padding-top: 27px; }
.handle { display: block; width: 336px; height: 12px; margin: 0 auto; border-radius: 6px; background: #d0d0d0; }
.bubble { position: absolute; left: 728px; top: 9px; }
.mark { position: absolute; left: 697px; top: 0; display: flex; gap: 10px; font-size: 30.500px; line-height: 48px; color: #fff; white-space: nowrap; text-shadow: 1px 1px 0 #8e8e8e, 0 0 1px #999; }
.mark span:first-child { font-size: 34px; font-weight: 500; }
```
